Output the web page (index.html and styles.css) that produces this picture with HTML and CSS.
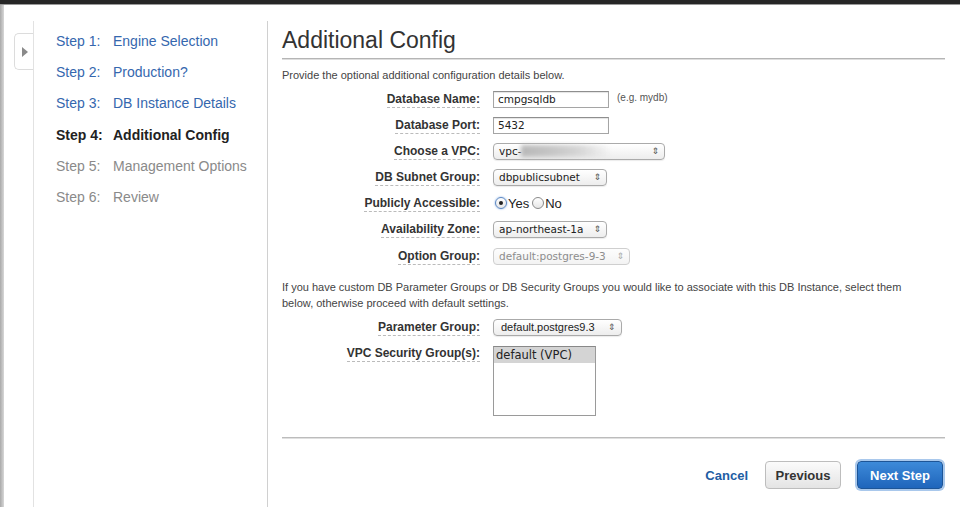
FILE: index.html
```html
<!DOCTYPE html>
<html>
<head>
<meta charset="utf-8">
<link rel="stylesheet" href="styles.css">
</head>
<body>
<div class="topbar"></div>
<div class="page">
  <div class="edge"></div>
  <div class="tabcol">
    <div class="toggle"><span class="tri"></span></div>
  </div>
  <nav class="sidebar">
    <div class="step link"><span class="num">Step 1:</span>Engine Selection</div>
    <div class="step link"><span class="num">Step 2:</span>Production?</div>
    <div class="step link"><span class="num">Step 3:</span>DB Instance Details</div>
    <div class="step current"><span class="num">Step 4:</span>Additional Config</div>
    <div class="step future"><span class="num">Step 5:</span>Management Options</div>
    <div class="step future"><span class="num">Step 6:</span>Review</div>
  </nav>
  <main class="main">
    <h1 class="title">Additional Config</h1>
    <p class="intro">Provide the optional additional configuration details below.</p>
    <div class="form">
      <div class="row"><div class="lbl"><span>Database Name:</span></div><div class="ctl"><div class="input">cmpgsqldb</div><span class="hint">(e.g. mydb)</span></div></div>
      <div class="row"><div class="lbl"><span>Database Port:</span></div><div class="ctl"><div class="input">5432</div></div></div>
      <div class="row"><div class="lbl"><span>Choose a VPC:</span></div><div class="ctl"><div class="select w-vpc">vpc-<span class="blur"></span><span class="arr">&#8661;</span></div></div></div>
      <div class="row"><div class="lbl"><span>DB Subnet Group:</span></div><div class="ctl"><div class="select w-sub">dbpublicsubnet<span class="arr">&#8661;</span></div></div></div>
      <div class="row"><div class="lbl"><span>Publicly Accessible:</span></div><div class="ctl radios"><span class="radio on"></span><span class="rtext">Yes</span><span class="radio"></span><span class="rtext">No</span></div></div>
      <div class="row"><div class="lbl"><span>Availability Zone:</span></div><div class="ctl"><div class="select w-sub">ap-northeast-1a<span class="arr">&#8661;</span></div></div></div>
      <div class="row last"><div class="lbl"><span>Option Group:</span></div><div class="ctl"><div class="select w-opt disabled">default:postgres-9-3<span class="arr">&#8661;</span></div></div></div>
    </div>
    <p class="para">If you have custom DB Parameter Groups or DB Security Groups you would like to associate with this DB Instance, select them<br>below, otherwise proceed with default settings.</p>
    <div class="form">
      <div class="row"><div class="lbl"><span>Parameter Group:</span></div><div class="ctl"><div class="select w-param small">default.postgres9.3<span class="arr">&#8661;</span></div></div></div>
      <div class="row top"><div class="lbl"><span>VPC Security Group(s):</span></div><div class="ctl"><div class="listbox"><div class="opt sel">default (VPC)</div></div></div></div>
    </div>
    <div class="rule"></div>
    <div class="actions">
      <a class="cancel">Cancel</a>
      <button class="btn prev">Previous</button>
      <button class="btn next">Next Step</button>
    </div>
  </main>
</div>
</body>
</html>
```

FILE: styles.css
```css
html, body {
  margin: 0;
  padding: 0;
  background: #fff;
  font-family: "Liberation Sans", Arial, sans-serif;
  color: #333;
}
.topbar {
  height: 5px;
  background: #262626;
  border-bottom: 1px solid #999;
  box-sizing: border-box;
}
.page {
  display: flex;
  height: 502px;
}
.edge {
  width: 4px;
  background: linear-gradient(to right, #a9a9a9, #d8d8d8);
}
.tabcol {
  width: 29px;
  padding-top: 28px;
  box-sizing: border-box;
}
.toggle {
  margin-left: 10px;
  width: 19px;
  height: 37px;
  box-sizing: border-box;
  border: 1px solid #dcdcdc;
  border-right: none;
  border-radius: 5px 0 0 5px;
  display: flex;
  align-items: center;
  padding-left: 7px;
}
.tri {
  width: 0;
  height: 0;
  border-top: 5px solid transparent;
  border-bottom: 5px solid transparent;
  border-left: 6px solid #8a8a8a;
}
.sidebar {
  margin-top: 16px;
  width: 235px;
  box-sizing: border-box;
  border-left: 1px solid #e2e2e2;
  border-right: 1px solid #d0d0d0;
  padding: 5px 0 0 22px;
  font-size: 14px;
}
.step {
  line-height: 31px;
  white-space: nowrap;
}
.step:nth-child(n+4) { position: relative; top: 1px; }
.num {
  display: inline-block;
  width: 57px;
}
.step.link { color: #3567ae; }
.step.current { color: #222; font-weight: bold; }
.step.future { color: #8a8a8a; }

.main {
  flex: 1;
  padding: 0 15px 0 14px;
  min-width: 0;
}
.title {
  margin: 20px 0 0;
  font-size: 23px;
  font-weight: normal;
  line-height: 30px;
  color: #333;
  padding-bottom: 3px;
  border-bottom: 1px solid #b5b5b5;
  box-shadow: 0 1px 0 #dedede;
}
.intro {
  margin: 9px 0 0;
  font-size: 11px;
  line-height: 14px;
  color: #444;
}
.form {
  margin-top: 4px;
}
.row {
  display: flex;
  align-items: center;
  height: 26px;
}
.row.last {
  margin-top: 1px;
}
.row.top {
  align-items: flex-start;
  height: auto;
}
.lbl {
  width: 198px;
  text-align: right;
  font-size: 12px;
  font-weight: bold;
  color: #333;
  flex-shrink: 0;
}
.lbl span {
  border-bottom: 1px dashed #bbb;
  padding-bottom: 1px;
}
.row.top .lbl {
  padding-top: 6px;
}
.ctl {
  margin-left: 13px;
  display: flex;
  align-items: center;
}
.input {
  width: 116px;
  height: 17px;
  box-sizing: border-box;
  border: 1px solid #a5a5a5;
  border-top-color: #8e8e8e;
  box-shadow: inset 0 1px 1px #e4e4e4;
  font-family: "DejaVu Sans", sans-serif;
  font-size: 10.5px;
  line-height: 15px;
  padding-left: 4px;
  color: #222;
}
.hint {
  margin-left: 8px;
  font-size: 10px;
  color: #555;
  position: relative;
  top: -2px;
}
.select {
  position: relative;
  height: 17px;
  box-sizing: border-box;
  border: 1px solid #aaa;
  border-radius: 4px;
  background: linear-gradient(#ffffff, #ededed);
  box-shadow: 0 1px 1px rgba(0,0,0,0.08);
  font-family: "DejaVu Sans", sans-serif;
  font-size: 10.5px;
  line-height: 15px;
  padding-left: 5px;
  color: #222;
  white-space: nowrap;
  display: flex;
  align-items: center;
}
.select.small {
  font-family: "Liberation Sans", Arial, sans-serif;
  font-size: 11px;
  padding-left: 7px;
}
.select.disabled {
  color: #8d8d8d;
  border-color: #cfcfcf;
  background: linear-gradient(#fdfdfd, #f3f3f3);
  box-shadow: none;
}
.arr {
  position: absolute;
  right: 5px;
  top: 0;
  font-size: 9px;
  line-height: 15px;
  color: #555;
}
.select.disabled .arr { color: #aaa; }
.w-vpc { width: 172px; }
.w-sub { width: 114px; }
.w-opt { width: 137px; }
.w-param { width: 129px; }
.blur {
  display: inline-block;
  width: 90px;
  height: 12px;
  background: linear-gradient(to right, #b8b8b8 0%, #c6c6c6 35%, #d6d6d6 65%, rgba(235,235,235,0) 100%);
  filter: blur(2px);
}
.radios {
  font-size: 13px;
  color: #222;
}
.radio {
  width: 12px;
  height: 12px;
  box-sizing: border-box;
  border-radius: 50%;
  border: 1px solid #8a8a8a;
  background: linear-gradient(#fff, #e6e6e6);
  margin-left: 2px;
  display: inline-flex;
  align-items: center;
  justify-content: center;
}
.radio.on {
  border-color: #5a86c2;
  box-shadow: 0 0 2px #7aa7e0;
}
.radio.on::after {
  content: "";
  width: 4px;
  height: 4px;
  border-radius: 50%;
  background: #222;
}
.rtext {
  margin-left: 1px;
  margin-right: 1px;
}
.para {
  margin: 10px 0 0;
  font-size: 11px;
  line-height: 16px;
  color: #444;
}
.para + .form { margin-top: 3px; }
.listbox {
  margin-top: 6px;
  width: 103px;
  height: 70px;
  box-sizing: border-box;
  border: 1px solid #9a9a9a;
  border-top-color: #888;
  background: #fff;
}
.opt {
  font-family: "DejaVu Sans", sans-serif;
  font-size: 11.5px;
  line-height: 16px;
  padding-left: 2px;
  color: #222;
}
.opt.sel {
  background: #d4d4d4;
}
.rule {
  margin-top: 21px;
  border-top: 1px solid #bcbcbc;
  border-bottom: 1px solid #e0e0e0;
}
.actions {
  display: flex;
  justify-content: flex-end;
  align-items: center;
  margin-top: 22px;
}
.cancel {
  font-size: 13px;
  font-weight: bold;
  color: #215da3;
  margin-right: 17px;
}
.btn {
  font-family: "Liberation Sans", Arial, sans-serif;
  font-size: 13px;
  font-weight: bold;
  height: 28px;
  border-radius: 4px;
  padding: 0;
  cursor: pointer;
}
.prev {
  width: 76px;
  border: 1px solid #bdbdbd;
  background: linear-gradient(#fbfbfb, #e4e4e4);
  color: #333;
  margin-right: 16px;
}
.next {
  width: 86px;
  border: 1px solid #1d5597;
  background: linear-gradient(#3d8ad9, #1f65bb);
  color: #fff;
  box-shadow: 0 0 0 2px #a9c8ec;
  margin-right: 2px;
}
```
